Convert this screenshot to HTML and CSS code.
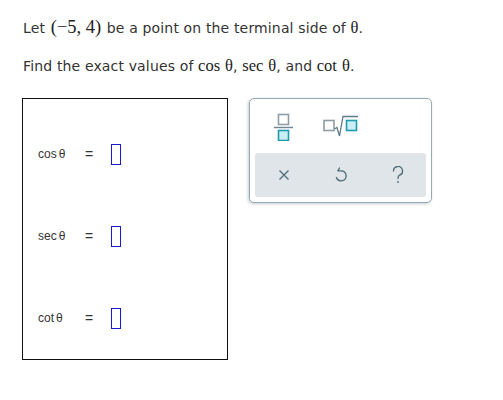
FILE: index.html
```html
<!DOCTYPE html>
<html>
<head>
<meta charset="utf-8">
<link rel="stylesheet" href="styles.css">
</head>
<body>
<div class="page">
  <p class="line l1">Let <span class="m big">(−5, 4)</span> be a point on the terminal side of <span class="m">θ</span>.</p>
  <p class="line l2">Find the exact values of <span class="m">cos<span class="sp"></span>θ</span>, <span class="m">sec<span class="sp"></span>θ</span>, and <span class="m">cot<span class="sp"></span>θ</span>.</p>
  <div class="work">
    <div class="answers">
      <div class="row"><span class="lbl">cos<span class="ts"></span>θ</span><span class="eq">=</span><span class="slot"></span></div>
      <div class="row"><span class="lbl">sec<span class="ts"></span>θ</span><span class="eq">=</span><span class="slot"></span></div>
      <div class="row"><span class="lbl">cot<span class="ts"></span>θ</span><span class="eq">=</span><span class="slot"></span></div>
    </div>
    <div class="panel">
      <div class="tools">
        <div class="cell">
          <svg width="19" height="28" viewBox="0 0 19 28">
            <rect x="4.5" y="1.5" width="10" height="10" fill="#fff" stroke="#8d9ea6" stroke-width="1.6"/>
            <line x1="0" y1="14.5" x2="19" y2="14.5" stroke="#6f8790" stroke-width="1.4"/>
            <rect x="4.5" y="17.5" width="10" height="10" fill="#c9eef4" stroke="#1f9bb0" stroke-width="1.6"/>
          </svg>
        </div>
        <div class="cell">
          <svg width="36" height="24" viewBox="0 0 36 24">
            <rect x="1" y="5.5" width="10" height="10" fill="#fff" stroke="#8d9ea6" stroke-width="1.6"/>
            <polyline points="11.5,14 14,12.5 16.5,21 20,1.5 35,1.5" fill="none" stroke="#5f7b86" stroke-width="1.3"/>
            <rect x="23.5" y="5.5" width="10" height="10" fill="#c9eef4" stroke="#1f9bb0" stroke-width="1.6"/>
          </svg>
        </div>
        <div class="cell"></div>
      </div>
      <div class="actions">
        <div class="cell">
          <svg width="12" height="12" viewBox="0 0 12 12">
            <path d="M1.5 1.5 L10.5 10.5 M10.5 1.5 L1.5 10.5" stroke="#4f6c78" stroke-width="1.3" fill="none"/>
          </svg>
        </div>
        <div class="cell">
          <svg width="14" height="16" viewBox="0 0 14 16">
            <path d="M5.5 1 L3.8 3.8 H7 A5 5 0 1 1 2.4 10.5" stroke="#4f6c78" stroke-width="1.3" fill="none" stroke-linecap="round" stroke-linejoin="round"/>
          </svg>
        </div>
        <div class="cell">
          <svg width="12" height="18" viewBox="0 0 12 18">
            <path d="M1.5 5 A4.5 4.5 0 1 1 7.5 9.2 C6.3 9.8 6 10.6 6 12.5" stroke="#4f6c78" stroke-width="1.3" fill="none" stroke-linecap="round"/>
            <circle cx="6" cy="16" r="0.9" fill="#4f6c78"/>
          </svg>
        </div>
      </div>
    </div>
  </div>
</div>
</body>
</html>
```
FILE: styles.css
```css
html, body {
  margin: 0;
  padding: 0;
  background: #fff;
}
.page {
  padding: 17px 0 0 23px;
  font-family: "DejaVu Sans", Verdana, sans-serif;
  font-size: 14px;
  color: #333;
}
.line {
  margin: 0;
  line-height: 20px;
  letter-spacing: 0.15px;
}
.l2 {
  margin-top: 18px;
}
.m {
  font-family: "Liberation Serif", "Times New Roman", serif;
  font-size: 16.5px;
  color: #222;
  letter-spacing: 0;
}
.m.big {
  font-size: 18.5px;
  margin: 0 1px;
}
.sp {
  display: inline-block;
  width: 5px;
}
.ts {
  display: inline-block;
  width: 2px;
}
.work {
  display: flex;
  align-items: flex-start;
  gap: 21px;
  margin-top: 22px;
  margin-left: -1px;
}
.answers {
  width: 204px;
  height: 246px;
  border: 1px solid #111;
  padding-top: 14px;
  display: flex;
  flex-direction: column;
}
.row {
  height: 82px;
  display: flex;
  align-items: center;
  padding-left: 15px;
  font-family: "Liberation Sans", Arial, sans-serif;
  font-size: 12px;
  color: #333;
}
.lbl {
  width: 47px;
}
.eq {
  width: 26px;
  font-size: 14px;
}
.slot {
  width: 8px;
  height: 19px;
  border: 1px solid #1a1ad6;
}
.panel {
  width: 171px;
  height: 98px;
  border: 1px solid #97aab3;
  border-radius: 5px;
  box-shadow: -1px 1px 3px rgba(80, 110, 120, 0.35);
  padding: 0 5px 5px 5px;
  display: flex;
  flex-direction: column;
}
.tools {
  display: flex;
  height: 54px;
}
.tools .cell {
  flex: 1;
  display: flex;
  align-items: center;
  justify-content: center;
  padding-top: 1px;
}
.actions {
  display: flex;
  height: 44px;
  background: #dfe5e8;
  border-radius: 3px;
}
.actions .cell {
  flex: 1;
  display: flex;
  align-items: center;
  justify-content: center;
}
```
